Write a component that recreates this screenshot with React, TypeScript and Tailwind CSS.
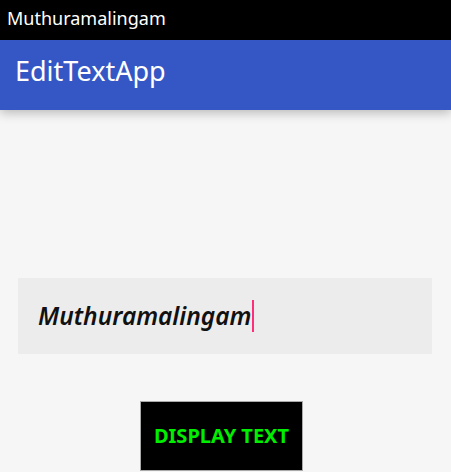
export default function App() {
  return (
    <div className="w-[451px] h-[472px] overflow-hidden bg-[#f6f6f6] font-['Noto_Sans',sans-serif]">

      {/* status bar */}
      <div className="h-[40px] bg-black text-white text-[18px] leading-[36px] pl-[7px]">
        Muthuramalingam
      </div>

      {/* app bar */}
      <div className="h-[70px] bg-[#3557c5] text-white text-[27px] leading-[62px] pl-[15px] shadow-[0_3px_10px_rgba(0,0,0,0.25)]">
        EditTextApp
      </div>

      {/* edit text */}
      <div className="mt-[168px] ml-[18px] mr-[19px] h-[76px] bg-[#ececec] flex items-center pl-[20px]">
        <span className="text-[24.5px] font-semibold italic text-[#111]">Muthuramalingam</span>
        <span className="w-[2px] h-[32px] bg-[#ff2d7a] ml-[1px]"></span>
      </div>

      {/* button */}
      <div className="mt-[47px] flex justify-center">
        <button className="w-[163px] h-[70px] ml-[-8px] bg-black border border-[#aaa] text-[#00ee00] text-[20px] font-bold">
          DISPLAY TEXT
        </button>
      </div>

    </div>
  )
}
